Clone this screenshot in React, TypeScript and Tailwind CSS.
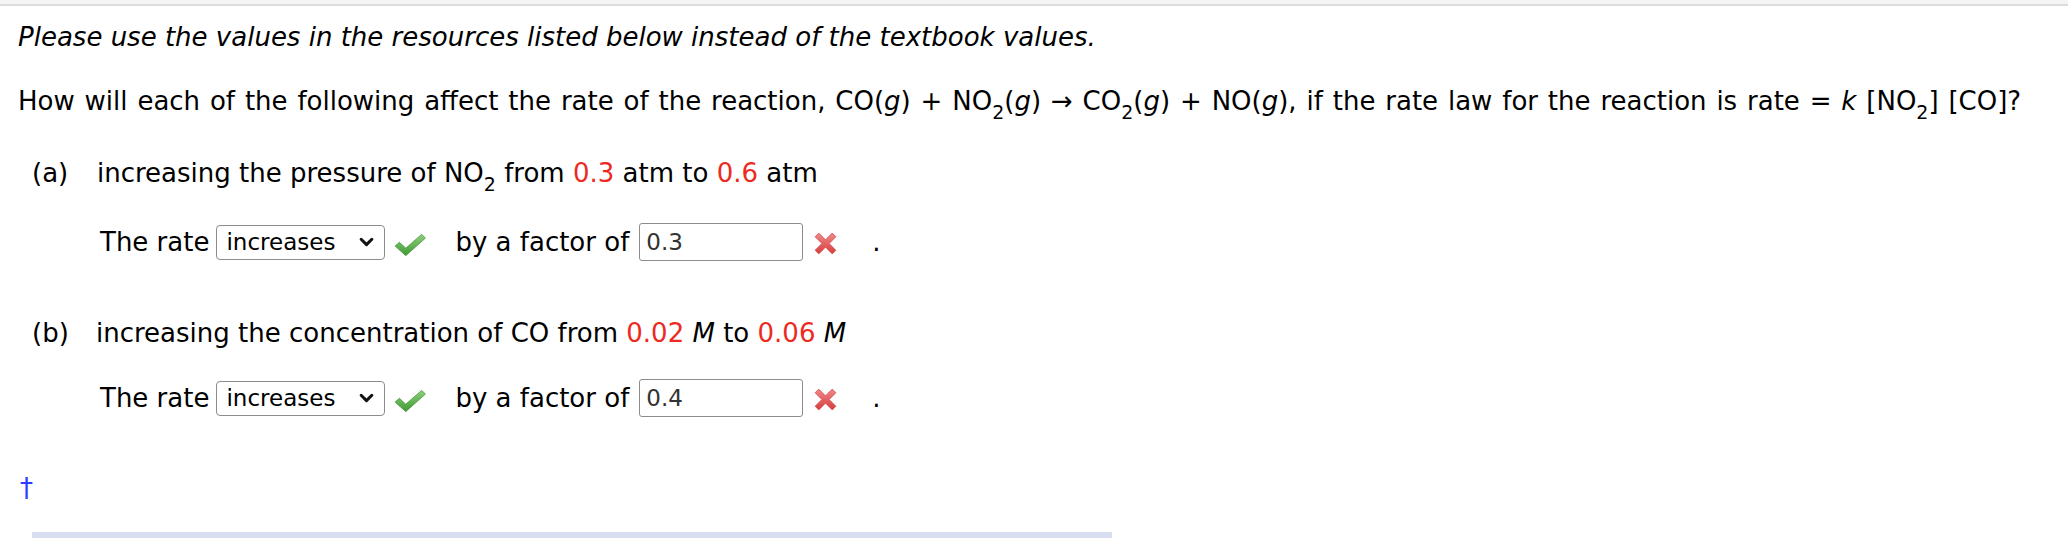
import React from "react";

const Sub = ({ children }: { children: React.ReactNode }) => (
  <span className="relative top-[9px] text-[19px]">{children}</span>
);

const Red = ({ children }: { children: React.ReactNode }) => (
  <span className="text-[#ec2a22]">{children}</span>
);

const Check = () => (
  <svg width="34" height="26" viewBox="0 0 32 24" className="shrink-0">
    <defs>
      <linearGradient id="gck" x1="0" y1="0" x2="0" y2="1">
        <stop offset="0" stopColor="#8fd07c" />
        <stop offset="1" stopColor="#3f9a34" />
      </linearGradient>
    </defs>
    <path
      d="M2 13 L6 9.5 L12 15 L27 2 L30.5 5.5 L12 22 Z"
      fill="url(#gck)"
      stroke="#4c9a3e"
      strokeWidth="0.8"
      strokeLinejoin="round"
    />
  </svg>
);

const Cross = () => (
  <svg width="27" height="27" viewBox="0 0 26 26" className="shrink-0">
    <defs>
      <linearGradient id="gx" x1="0" y1="0" x2="0" y2="1">
        <stop offset="0" stopColor="#f08a8a" />
        <stop offset="1" stopColor="#d83c3c" />
      </linearGradient>
    </defs>
    <path
      d="M3 6.5 L6.5 3 L13 9.5 L19.5 3 L23 6.5 L16.5 13 L23 19.5 L19.5 23 L13 16.5 L6.5 23 L3 19.5 L9.5 13 Z"
      fill="url(#gx)"
      stroke="#d25050"
      strokeWidth="0.8"
      strokeLinejoin="round"
    />
  </svg>
);

const Chevron = () => (
  <svg width="15" height="11" viewBox="0 0 14 10">
    <path d="M2 2 L7 7 L12 2" fill="none" stroke="#111" strokeWidth="2.8" strokeLinecap="round" strokeLinejoin="round" />
  </svg>
);

const AnswerRow = ({ value }: { value: string }) => (
  <div className="flex items-center h-[38px] pl-[82px]">
    <span>The rate</span>
    <div className="ml-[7px] w-[169px] h-[35px] border-[1.5px] border-[#8c8c8c] rounded-[4px] flex items-center justify-between pl-[9px] pr-[10px] text-[23px]">
      <span>increases</span>
      <Chevron />
    </div>
    <span className="ml-[8px] mt-[6px]">
      <Check />
    </span>
    <span className="ml-[28px]">by a factor of</span>
    <div className="ml-[10px] w-[164px] h-[38px] border-[1.5px] border-[#8c8c8c] rounded-[3px] flex items-center pl-[6px] text-[23px] text-[#333]">
      {value}
    </div>
    <span className="ml-[9px] mt-[2px]">
      <Cross />
    </span>
    <span className="ml-[33px]">.</span>
  </div>
);

export default function App() {
  return (
    <div
      className="w-[2068px] h-[538px] overflow-hidden bg-white text-black text-[26px] leading-[32px]"
      style={{ fontFamily: '"DejaVu Sans", Verdana, sans-serif' }}
    >
      <div className="h-[4px] bg-[#f4f4f4]" />
      <div className="h-[2px] bg-[#dcdcdc]" />
      <div className="pl-[18px]">
        <p className="mt-[15px] italic">
          Please use the values in the resources listed below instead of the textbook values.
        </p>
        <p className="mt-[32px] whitespace-nowrap [word-spacing:1.6px]">
          How will each of the following affect the rate of the reaction, CO(<i>g</i>) + NO
          <Sub>2</Sub>(<i>g</i>) → CO<Sub>2</Sub>(<i>g</i>) + NO(<i>g</i>), if the rate law for the
          reaction is rate = <i>k</i> [NO<Sub>2</Sub>] [CO]?
        </p>
        <div className="mt-[38px] flex pl-[14px]">
          <span className="w-[65px]">(a)</span>
          <span>
            increasing the pressure of NO<Sub>2</Sub> from <Red>0.3</Red> atm to <Red>0.6</Red> atm
          </span>
        </div>
        <div className="mt-[32px]">
          <AnswerRow value="0.3" />
        </div>
        <div className="mt-[56px] flex pl-[14px]">
          <span className="w-[64px]">(b)</span>
          <span>
            increasing the concentration of CO from <Red>0.02</Red> <i>M</i> to <Red>0.06</Red>{" "}
            <i>M</i>
          </span>
        </div>
        <div className="mt-[30px]">
          <AnswerRow value="0.4" />
        </div>
        <div className="mt-[55px] pl-[2px]">
          <span className="text-[#2a3cff]">†</span>
        </div>
        <div className="mt-[28px] ml-[14px] w-[1080px] h-[8px] bg-[#d8ddf2]" />
      </div>
    </div>
  );
}
